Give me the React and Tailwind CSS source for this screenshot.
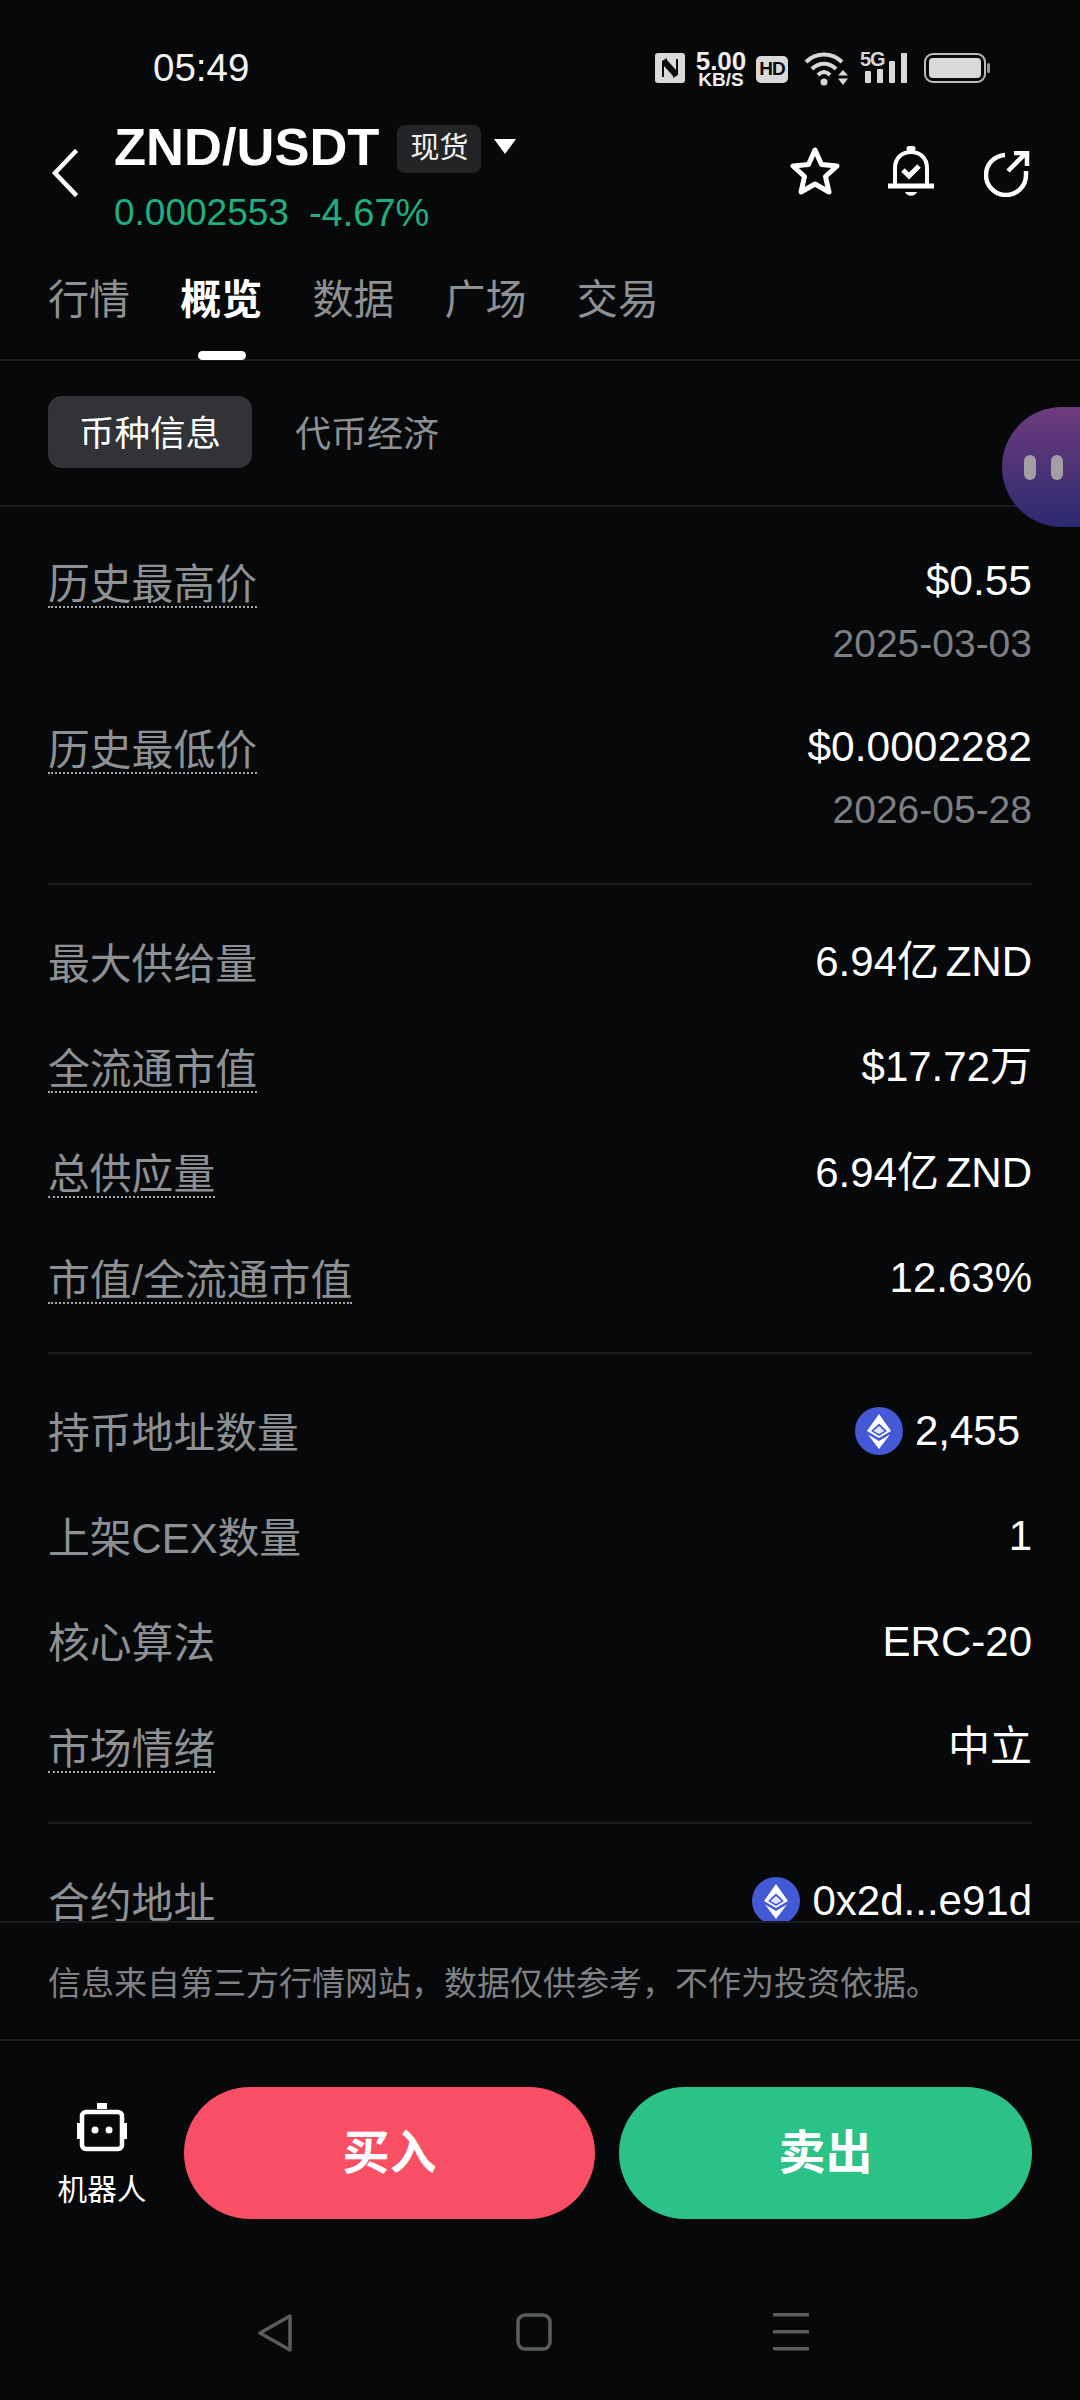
import React from 'react';

const FONT = "font-['Liberation_Sans','Noto_Sans_CJK_SC',sans-serif]";

const EthIcon = ({ size = 48 }) => (
  <svg width={size} height={size} viewBox="0 0 48 48" className="shrink-0">
    <circle cx="24" cy="24" r="24" fill="#4459d6" />
    <path d="M24 7 L36 24 L24 31 L12 24 Z" fill="#fff" />
    <path d="M24 34 L35 27.5 L24 42 L13 27.5 Z" fill="#fff" />
    <path d="M24 16.5 L32 24 L24 29 L16 24 Z" fill="#4459d6" />
    <path d="M24 19 L29.5 24 L24 27 L18.5 24 Z" fill="#dfe3fa" />
  </svg>
);

const StatusBar = () => (
  <div className="flex h-[120px] items-start pt-[52px] pl-[153px] pr-[90px]">
    <span className="text-[38.5px] leading-[32px] text-[#f2f2f2]">05:49</span>
    <div className="ml-auto flex items-start text-[#d9d9d9]">
      <svg width="30" height="30" viewBox="0 0 30 30" className="mt-px">
        <rect width="30" height="30" rx="3" fill="#d9d9d9" />
        <path d="M7 24V8l5-3v2l9 10V6h2v16l-5 3v-2L9 13v11Z" fill="#0a0a0a" />
      </svg>
      <div className="ml-[9px] flex w-[54px] flex-col items-center font-bold">
        <span className="text-[26px] leading-[19px] text-[#eee]">5.00</span>
        <span className="text-[19px] leading-[17px] text-[#eee]">KB/S</span>
      </div>
      <div className="ml-[8px] mt-[4px] flex h-[27px] w-[32px] items-center justify-center rounded-[5px] bg-[#d9d9d9] text-[19px] font-bold tracking-[-1px] text-[#0a0a0a]">HD</div>
      <svg width="44" height="34" viewBox="0 0 44 34" className="ml-[16px]" fill="none" stroke="#d9d9d9" strokeWidth="4">
        <path d="M2 10 C12 0 28 0 38 10" />
        <path d="M8 17 C15 10 25 10 32 17" />
        <path d="M14 23 C18 19 22 19 26 23" />
        <circle cx="20" cy="30" r="3.5" fill="#d9d9d9" stroke="none" />
        <path d="M39 18 L44 23.5 L34 23.5 Z M39 33 L44 26.5 L34 26.5 Z" fill="#d9d9d9" stroke="none" />
      </svg>
      <div className="relative ml-[14px] h-[32px] w-[46px]">
        <span className="absolute -left-[2px] -top-[1px] text-[20px] font-bold leading-[16px] tracking-[-1px] text-[#d9d9d9]">5G</span>
        <svg width="46" height="32" viewBox="0 0 46 32" fill="#d9d9d9">
          <rect x="3" y="19" width="6" height="12" rx="1" />
          <rect x="15" y="17" width="6" height="14" rx="1" />
          <rect x="27" y="9" width="6" height="22" rx="1" />
          <rect x="39" y="1" width="6" height="30" rx="1" />
        </svg>
      </div>
      <svg width="66" height="30" viewBox="0 0 66 30" className="ml-[16px] mt-px">
        <rect x="1" y="1" width="60" height="28" rx="8" fill="none" stroke="#bdbdbd" strokeWidth="2" />
        <rect x="5" y="5" width="52" height="20" rx="4" fill="#d9d9d9" />
        <rect x="63" y="10" width="3" height="10" rx="1.5" fill="#9a9a9a" />
      </svg>
    </div>
  </div>
);

const Header = () => (
  <div className="flex h-[120px] items-start">
    <svg width="28" height="48" viewBox="0 0 28 48" className="ml-[51px] mt-[29px]" fill="none" stroke="#fff" strokeWidth="4.5" strokeLinecap="square">
      <path d="M24 3 L4 24 L24 45" />
    </svg>
    <div className="ml-[35px] -mt-[3px] flex flex-col">
      <div className="flex items-center">
        <span className="text-[52.5px] font-bold leading-[60px] text-white">ZND/USDT</span>
        <span className="ml-[18px] mt-[4px] flex h-[48px] w-[84px] items-center justify-center rounded-[8px] bg-[#232425] text-[29px] text-[#f0f0f0]">现货</span>
        <svg width="22" height="15" viewBox="0 0 22 15" className="ml-[13px] -mt-[2px]">
          <path d="M0 0 H22 L11 15 Z" fill="#fff" />
        </svg>
      </div>
      <div className="mt-[15px] flex text-[37px] leading-[42px] text-[#1faf7f]">
        <span>0.0002553</span>
        <span className="ml-[20px] text-[38px]">-4.67%</span>
      </div>
    </div>
    <div className="ml-auto mr-[50px] mt-[27px] flex items-start">
      <svg width="50" height="48" viewBox="0 0 50 48" fill="none" stroke="#fff" strokeWidth="5" strokeLinejoin="round">
        <path d="M25 3 L31.5 17.5 L47 19 L35.5 29.5 L39 45 L25 37 L11 45 L14.5 29.5 L3 19 L18.5 17.5 Z" />
      </svg>
      <svg width="46" height="52" viewBox="0 0 46 52" className="ml-[48px] -mt-[1px]" fill="none" stroke="#fff" strokeWidth="4">
        <path d="M7 39 V22 C7 12 14 6 23 6 C32 6 39 12 39 22 V39" />
        <path d="M0 40 H46" strokeWidth="5" />
        <path d="M21 2.5 H25" strokeWidth="5" strokeLinecap="round" />
        <path d="M15 24 L21 30 L31 20" strokeWidth="5" />
        <path d="M17 46 H29 C27 51 19 51 17 46 Z" fill="#fff" stroke="none" />
      </svg>
      <svg width="46" height="46" viewBox="0 0 46 46" className="ml-[50px] mt-[4px]" fill="none" stroke="#fff" strokeWidth="4.5">
        <path d="M21 4 C10 5 2 13 2 24 C2 35 11 44 22 44 C33 44 42 35 42 24 L42 20" />
        <path d="M24 20 L42 2 M30 2 H43 V15" />
      </svg>
    </div>
  </div>
);

const tabs = ['行情', '概览', '数据', '广场', '交易'];

const Tabs = () => (
  <div className="flex h-[121px] gap-[49.2px] border-b-2 border-[#1b1d1e] pl-[48px]">
    {tabs.map((t, i) => (
      <div key={t} className="relative w-[83px] pt-[32px]">
        <span className={`text-[41px] leading-[56px] ${i === 1 ? 'font-bold text-white' : 'text-[#8e9194]'}`}>{t}</span>
        {i === 1 && <div className="absolute bottom-[-1px] left-[18px] h-[9px] w-[48px] rounded-full bg-white" />}
      </div>
    ))}
  </div>
);

const SubTabs = () => (
  <div className="flex h-[146px] items-start border-b-2 border-[#1b1d1e] pl-[48px] pt-[35px]">
    <div className="flex h-[72px] w-[204px] items-center justify-center rounded-[14px] bg-[#323336] pt-[6px] text-[35.5px] text-white">币种信息</div>
    <div className="ml-[43px] flex h-[72px] items-center pt-[6px] text-[36px] text-[#8e9194]">代币经济</div>
  </div>
);

const Label = ({ text, dotted }) => (
  <span className={`inline-block h-[48px] text-[41.8px] leading-[50px] text-[#8e9194] ${dotted ? 'border-b-2 border-dotted border-[#a5a8aa]' : ''}`}>{text}</span>
);

const PriceRow = ({ label, value, date }) => (
  <div className="flex h-[166px] items-start justify-between">
    <div className="pt-[10px]"><Label text={label} dotted /></div>
    <div className="flex flex-col items-end pt-[6px]">
      <span className="text-[42.5px] leading-[50px] text-white">{value}</span>
      <span className="mt-[13px] text-[39px] leading-[50px] text-[#7d7f82]">{date}</span>
    </div>
  </div>
);

const Row = ({ label, dotted, children }) => (
  <div className="flex h-[105.3px] items-center justify-between">
    <Label text={label} dotted={dotted} />
    <div className="flex items-center pb-[3px] text-[42px] leading-[50px] [word-spacing:-5px] text-white">{children}</div>
  </div>
);

const Divider = () => <div className="h-[2px] bg-[#1b1d1e]" />;

const Content = () => (
  <div className="h-[1414px] overflow-hidden px-[48px]">
    <div className="h-[376px] pt-[43px]">
      <PriceRow label="历史最高价" value="$0.55" date="2025-03-03" />
      <PriceRow label="历史最低价" value="$0.0002282" date="2026-05-28" />
    </div>
    <Divider />
    <div className="h-[467px] pt-[26px]">
      <Row label="最大供给量">6.94亿 ZND</Row>
      <Row label="全流通市值" dotted>$17.72万</Row>
      <Row label="总供应量" dotted>6.94亿 ZND</Row>
      <Row label="市值/全流通市值" dotted>12.63%</Row>
    </div>
    <Divider />
    <div className="h-[468px] pt-[26px]">
      <Row label="持币地址数量">
        <EthIcon />
        <span className="ml-[12px] mr-[12px]">2,455</span>
      </Row>
      <Row label="上架CEX数量">1</Row>
      <Row label="核心算法">ERC-20</Row>
      <Row label="市场情绪" dotted>中立</Row>
    </div>
    <Divider />
    <div className="pt-[26px]">
      <Row label="合约地址">
        <EthIcon />
        <span className="ml-[12px]">0x2d...e91d</span>
      </Row>
    </div>
  </div>
);

const Notice = () => (
  <div className="flex h-[120px] items-center border-y-2 border-[#1b1d1e] pl-[48px] pt-[5px] text-[33px] text-[#808285]">
    信息来自第三方行情网站，数据仅供参考，不作为投资依据。
  </div>
);

const BottomBar = () => (
  <div className="flex h-[212px] items-start pt-[46px]">
    <div className="flex w-[184px] flex-col items-center pl-[20px] pt-[16px]">
      <svg width="50" height="50" viewBox="0 0 50 50" fill="none" stroke="#fff" strokeWidth="4.5">
        <rect x="5" y="9" width="40" height="37" rx="4" />
        <path d="M20 3 H30" strokeWidth="6" />
        <path d="M1.5 20 V36 M48.5 20 V36" strokeWidth="3" />
        <circle cx="18" cy="27" r="3.5" fill="#fff" stroke="none" />
        <circle cx="32" cy="27" r="3.5" fill="#fff" stroke="none" />
      </svg>
      <span className="mt-[17px] text-[29.6px] leading-[40px] text-white">机器人</span>
    </div>
    <div className="flex h-[132px] w-[411px] items-center justify-center rounded-full bg-[#f94f64] text-[47px] font-bold text-white">买入</div>
    <div className="ml-[24px] flex h-[132px] w-[413px] items-center justify-center rounded-full bg-[#2bc287] text-[47px] font-bold text-white">卖出</div>
  </div>
);

const NavBar = () => (
  <div className="relative flex h-[107px] items-start">
    <svg width="36" height="40" viewBox="0 0 36 40" className="ml-[257px] mt-[60px]" fill="none" stroke="#5a5c5e" strokeWidth="3.5" strokeLinejoin="round">
      <path d="M33 3 V37 L3 20 Z" />
    </svg>
    <svg width="36" height="38" viewBox="0 0 36 38" className="ml-[223px] mt-[60px]" fill="none" stroke="#5a5c5e" strokeWidth="3.5">
      <rect x="2" y="2" width="32" height="34" rx="7" />
    </svg>
    <svg width="36" height="38" viewBox="0 0 36 38" className="ml-[221px] mt-[60px]" fill="#5a5c5e">
      <rect y="0" width="36" height="3.5" />
      <rect y="17" width="36" height="3.5" />
      <rect y="34" width="36" height="3.5" />
    </svg>
  </div>
);

export default function App() {
  return (
    <div className={`relative h-[2400px] w-[1080px] overflow-hidden bg-[#060809] ${FONT}`}>
      <StatusBar />
      <Header />
      <Tabs />
      <SubTabs />
      <Content />
      <Notice />
      <BottomBar />
      <NavBar />
      {/* floating assistant bubble */}
      <div className="absolute left-[1002px] top-[407px] flex h-[120px] w-[78px] items-center gap-[15px] rounded-l-[60px] bg-gradient-to-b from-[#6e3a7c] to-[#2a2a70] pl-[22px]">
        <div className="h-[25px] w-[12px] rounded-full bg-[#a39ea4]" />
        <div className="h-[25px] w-[12px] rounded-full bg-[#a39ea4]" />
      </div>
    </div>
  );
}
